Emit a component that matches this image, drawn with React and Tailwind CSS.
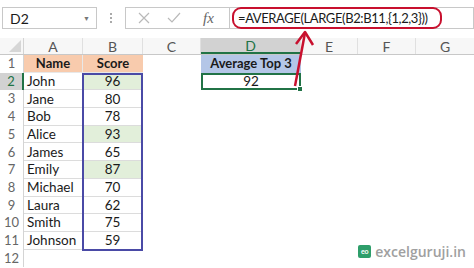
import React from 'react';

const cols = [
  { key: 'A', w: 59 },
  { key: 'B', w: 60 },
  { key: 'C', w: 58 },
  { key: 'D', w: 100 },
  { key: 'E', w: 57 },
  { key: 'F', w: 58 },
  { key: 'G', w: 59 },
];

const people = [
  ['John', 96, true],
  ['Jane', 80, false],
  ['Bob', 78, false],
  ['Alice', 93, true],
  ['James', 65, false],
  ['Emily', 87, true],
  ['Michael', 70, false],
  ['Laura', 62, false],
  ['Smith', 75, false],
  ['Johnson', 59, false],
];

const font = { fontFamily: 'Lato, "Open Sans", Arial, sans-serif' };

function RowHead({ n, active }) {
  return (
    <div
      className={`w-[24px] shrink-0 h-full flex items-center justify-center border-r border-[#d4d4d4] text-[13px] ${
        active ? 'bg-[#d2d2d2] text-[#217346] border-r-2 border-r-[#217346]' : 'text-[#666]'
      }`}
    >
      {n}
    </div>
  );
}

export default function App() {
  return (
    <div className="relative w-[474px] h-[268px] overflow-hidden bg-white text-[#1a1a1a]" style={font}>
      {/* formula bar */}
      <div className="flex items-start h-[38px] pt-[7px]">
        <div className="ml-[2px] w-[95px] h-[22px] border border-[#c8c8c8] flex items-center justify-between pl-[7px] pr-[6px]">
          <span className="text-[14px]">D2</span>
          <span className="text-[7px] text-[#777]">▼</span>
        </div>
        <div className="w-[28px] h-[22px] flex flex-col items-center justify-center gap-[2px]">
          <span className="w-[2px] h-[2px] bg-[#aaa]" />
          <span className="w-[2px] h-[2px] bg-[#aaa]" />
          <span className="w-[2px] h-[2px] bg-[#aaa]" />
        </div>
        <div className="w-[104px] h-[22px] border border-[#c8c8c8] border-r-0 flex items-center text-[#b5b5b5]">
          <svg width="12" height="12" viewBox="0 0 12 12" className="ml-[12px]">
            <path d="M1 1 L11 11 M11 1 L1 11" stroke="#b9b9b9" strokeWidth="1.2" fill="none" />
          </svg>
          <svg width="14" height="12" viewBox="0 0 14 12" className="ml-[17px]">
            <path d="M1 6 L5 10 L13 1" stroke="#b9b9b9" strokeWidth="1.2" fill="none" />
          </svg>
          <span className="ml-[22px] text-[15px] italic text-[#666]" style={{ fontFamily: '"Liberation Serif", serif' }}>
            fx
          </span>
        </div>
        <div className="flex-1 h-[22px] border border-[#c8c8c8] flex items-center pl-[2px]">
          <span className="inline-block border-[2.5px] border-[#c8102e] rounded-[9px] pl-[4px] pr-[12px] leading-[18px] text-[13px] tracking-[-0.4px] -my-[1px]">
            =AVERAGE(LARGE(B2:B11,{'{'}1,2,3{'}'}))
          </span>
        </div>
      </div>

      {/* column headers */}
      <div className="flex h-[17px] border-b border-[#c8c8c8] bg-[#f7f7f7]">
        <div className="w-[24px] shrink-0 relative border-r border-[#d4d4d4]">
          <svg width="12" height="12" viewBox="0 0 12 12" className="absolute right-[2px] bottom-[2px]">
            <path d="M12 0 L12 12 L0 12 Z" fill="#d6d6d6" />
          </svg>
        </div>
        {cols.map((c) => (
          <div
            key={c.key}
            style={{ width: c.w }}
            className={`shrink-0 flex items-center justify-center text-[14px] border-r border-[#e0e0e0] ${
              c.key === 'D' ? 'bg-[#d2d2d2] text-[#217346] border-b-2 border-b-[#217346]' : 'text-[#555]'
            }`}
          >
            {c.key}
          </div>
        ))}
      </div>

      {/* row 1 */}
      <div className="flex h-[17.7px]">
        <RowHead n={1} />
        <div className="w-[59px] shrink-0 bg-[#f8cbad] font-bold text-[13px] flex items-center justify-center border-r border-b border-[#e8e8e8]">
          Name
        </div>
        <div className="w-[60px] shrink-0 bg-[#f8cbad] font-bold text-[13px] flex items-center justify-center border-b border-[#e8e8e8]">
          Score
        </div>
        <div className="w-[58px] shrink-0" />
        <div className="w-[100px] shrink-0 bg-[#b4c6e7] font-bold text-[13px] flex items-center justify-center">
          Average Top 3
        </div>
      </div>

      {/* data rows */}
      <div className="flex">
        <div className="flex flex-col">
          {people.map(([name, score, hi], i) => (
            <div key={name} className="flex h-[17.7px]">
              <RowHead n={i + 2} active={i === 0} />
              <div className="w-[58px] shrink-0 text-[13.5px] flex items-center pl-[3px] border-b border-[#dcdcdc]">
                {name}
              </div>
              <div
                className={`w-[61px] shrink-0 text-[13.5px] flex items-center justify-center border-b border-[#dcdcdc] ${
                  hi ? 'bg-[#e2efda]' : ''
                }`}
              >
                {score}
              </div>
            </div>
          ))}
          <div className="flex h-[17.7px]">
            <RowHead n={12} />
          </div>
        </div>
        <div className="w-[58px] shrink-0" />
        <div className="w-[100px] shrink-0">
          <div className="relative h-[17.7px] border-2 border-[#217346] flex items-center justify-center text-[13.5px]">
            92
            <span className="absolute -right-[4px] -bottom-[4px] w-[6px] h-[6px] bg-[#217346] border border-white" />
          </div>
        </div>
      </div>

      {/* B2:B11 range highlight */}
      <div className="absolute left-[82px] top-[73px] w-[61px] h-[178px] border-2 border-[#4a4aa6] pointer-events-none" />

      {/* arrow */}
      <svg className="absolute left-0 top-0 pointer-events-none" width="474" height="268">
        <path d="M295 86 L305 33" stroke="#c8102e" strokeWidth="2.5" fill="none" />
        <path d="M296 44 L305 32 L313 45" stroke="#c8102e" strokeWidth="2.5" fill="none" strokeLinejoin="round" />
      </svg>

      {/* watermark */}
      <div className="absolute right-[8px] bottom-[6px] flex items-center gap-[4px]">
        <div className="w-[13px] h-[13px] rounded-[2px] bg-[#2e9e6a] flex items-center justify-center">
          <span className="text-[7px] text-white font-bold leading-none">eo</span>
        </div>
        <span className="text-[14px] font-semibold text-[#a0a0a0]" style={{ fontFamily: '"Open Sans", sans-serif' }}>
          excelguruji.in
        </span>
      </div>
    </div>
  );
}
